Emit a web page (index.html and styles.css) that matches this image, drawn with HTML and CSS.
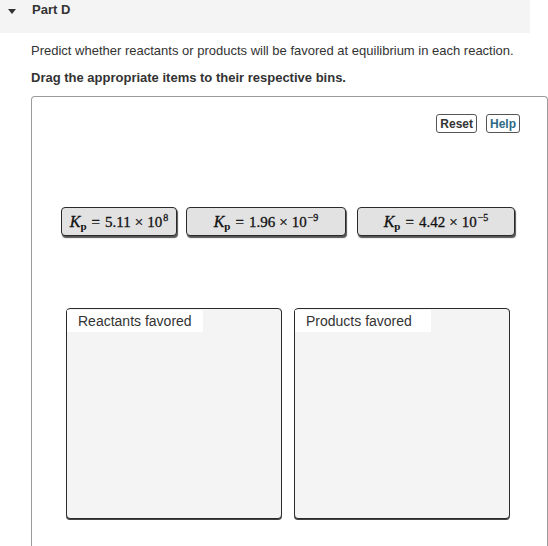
FILE: index.html
```html
<!DOCTYPE html>
<html>
<head>
<meta charset="utf-8">
<link rel="stylesheet" href="styles.css">
</head>
<body>
<div class="part-header">
  <span class="caret"></span>
  <span class="part-title">Part D</span>
</div>
<div class="content">
  <p class="prompt">Predict whether reactants or products will be favored at equilibrium in each reaction.</p>
  <p class="instr">Drag the appropriate items to their respective bins.</p>
  <div class="workspace">
    <div class="tools">
      <button class="btn">Reset</button>
      <button class="btn help">Help</button>
    </div>
    <div class="cards">
      <div class="card c1"><span class="m"><i>K</i><sub>p</sub><span class="rel">=</span>5.11<span class="op">×</span>10<sup>8</sup></span></div>
      <div class="card c2"><span class="m"><i>K</i><sub>p</sub><span class="rel">=</span>1.96<span class="op">×</span>10<sup>−9</sup></span></div>
      <div class="card c3"><span class="m"><i>K</i><sub>p</sub><span class="rel">=</span>4.42<span class="op">×</span>10<sup>−5</sup></span></div>
    </div>
    <div class="bins">
      <div class="bin"><div class="bin-label">Reactants favored</div></div>
      <div class="bin"><div class="bin-label">Products favored</div></div>
    </div>
  </div>
</div>
</body>
</html>
```
FILE: styles.css
```css
html, body { margin: 0; padding: 0; background: #fff; }
body { font-family: "Liberation Sans", Arial, sans-serif; color: #333; }

.part-header {
  width: 530px; height: 33px; background: #f4f4f4;
  display: flex; align-items: flex-start; box-sizing: border-box; padding-top: 3px;
}
.caret {
  width: 0; height: 0; margin: 6px 0 0 8px;
  border-left: 4px solid transparent; border-right: 4px solid transparent;
  border-top: 5px solid #333;
}
.part-title { margin-left: 16px; font-weight: bold; font-size: 13px; line-height: 14px; color: #333; }

.content { padding-left: 31px; }
.prompt { margin: 10px 0 0; font-size: 13px; line-height: 16px; color: #333; }
.instr { margin: 11px 0 0; font-size: 13px; line-height: 16px; font-weight: bold; color: #333; }

.workspace {
  margin-top: 10px; height: 460px; box-sizing: border-box;
  border: 1px solid #9a9a9a; border-bottom: none; border-radius: 4px 4px 0 0;
}
.tools { display: flex; justify-content: flex-end; gap: 9px; padding: 17px 27px 0 0; }
.btn {
  font-family: "Liberation Sans", Arial, sans-serif; font-weight: bold; font-size: 12px;
  color: #333; background: #fff; border: 1px solid #555; border-radius: 3px;
  height: 19px; padding: 0 3px; line-height: 16px;
}
.btn.help { color: #2d6a86; }

.cards { display: flex; gap: 9px; margin: 74px 0 0 29px; }
.card {
  height: 29px; box-sizing: border-box; display: flex; align-items: center; justify-content: center;
  background: #e2e2e2; border: 1px solid #2a2a2a; border-radius: 4px;
  box-shadow: 1px 2px 1px #555;
}
.c1 { width: 116px; }
.c2 { width: 160px; }
.c3 { width: 158px; margin-left: 2px; }
.m { font-family: "Liberation Serif", "Times New Roman", serif; font-size: 15px; color: #111; white-space: nowrap; -webkit-text-stroke: 0.3px #111; }
.m i { font-size: 16px; }
.m sub { font-size: 11px; font-weight: bold; vertical-align: -3px; -webkit-text-stroke: 0; }
.m sup { font-size: 10px; vertical-align: 6px; margin-left: 1px; }
.rel { margin: 0 5px; }
.op { margin: 0 4px; }

.bins { display: flex; gap: 12px; margin: 72px 0 0 34px; }
.bin {
  width: 216px; height: 211px; box-sizing: border-box; background: #f4f4f4;
  border: 1px solid #2a2a2a; border-radius: 4px; box-shadow: 0 1px 0 #444;
}
.bin-label {
  display: inline-block; background: #fff; font-size: 14px; line-height: 22px;
  padding: 0 10px 0 11px; color: #333; margin-top: 1px; min-width: 115px;
}
```
